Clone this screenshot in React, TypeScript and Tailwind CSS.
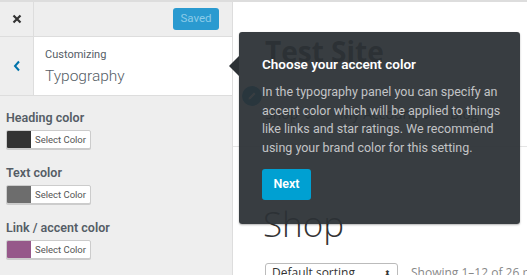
import React from 'react';

const swatches = [
  { label: 'Heading color', color: '#333333' },
  { label: 'Text color', color: '#6d6d6d' },
  { label: 'Link / accent color', color: '#96588a' },
];

function ColorControl({ label, color }: { label: string; color: string }) {
  return (
    <div className="mb-[16px]">
      <div className="text-[12.5px] font-semibold text-[#555d66] leading-[16px] mb-[4px]">{label}</div>
      <button className="flex h-[19px] w-[85px] items-stretch rounded-[2px] border border-[#ccc] bg-white shadow-[0_1px_0_#ccc] overflow-hidden">
        <span className="w-[24px] shrink-0" style={{ backgroundColor: color }} />
        <span className="flex-1 text-center text-[9.5px] leading-[17px] text-[#555]">Select Color</span>
      </button>
    </div>
  );
}

export default function App() {
  return (
    <div
      className="relative flex w-[527px] h-[275px] overflow-hidden border-t-2 border-[#ddd] bg-white"
      style={{ fontFamily: 'Roboto, "Noto Sans", sans-serif' }}
    >
      {/* customizer sidebar */}
      <div className="w-[233px] shrink-0 bg-[#eee] border-r border-[#ddd] flex flex-col">
        <div className="flex h-[35px] shrink-0 border-b border-[#ddd]">
          <div className="w-[34px] border-r border-[#ddd] flex items-center justify-center">
            <svg width="10" height="10" viewBox="0 0 10 10">
              <path d="M1.5 1.5 L8.5 8.5 M8.5 1.5 L1.5 8.5" stroke="#333" strokeWidth="2.2" />
            </svg>
          </div>
          <div className="flex-1 flex items-center justify-end pr-[13px]">
            <button className="h-[22px] w-[46px] rounded-[3px] bg-[#2a9ad0] text-[11.5px] text-[#8ccbe8]">Saved</button>
          </div>
        </div>
        <div className="flex h-[59px] shrink-0 border-b border-[#ddd]">
          <div className="w-[34px] border-r border-[#ddd] flex items-center justify-center">
            <svg width="8" height="12" viewBox="0 0 8 12">
              <path d="M6 1.5 L2 6 L6 10.5" stroke="#0073aa" strokeWidth="2" fill="none" />
            </svg>
          </div>
          <div className="flex-1 bg-white pl-[11px] pt-[11px]">
            <div className="text-[11px] text-[#555d66] leading-[14px]">Customizing</div>
            <div className="mt-[3px] text-[15.5px] font-light text-[#555d66] leading-[22px]">Typography</div>
          </div>
        </div>
        <div className="pl-[6px] pt-[14px]">
          {swatches.map((s) => (
            <ColorControl key={s.label} label={s.label} color={s.color} />
          ))}
        </div>
      </div>

      {/* site preview */}
      <div className="flex-1 flex flex-col" style={{ fontFamily: '"Open Sans", sans-serif' }}>
        <div className="h-[145px] shrink-0 border-b border-[#e5e5e5] pl-[32px] pt-[32px]">
          <div className="text-[28px] font-bold text-[#333] leading-[34px]">Test Site</div>
          <div className="flex items-center mt-[18px] -ml-[23px]">
            <span className="w-[20px] h-[20px] rounded-full bg-[#0085ba] flex items-center justify-center">
              <svg width="10" height="10" viewBox="0 0 10 10">
                <path d="M1.5 8.5 L2 6.5 L7 1.5 L8.5 3 L3.5 8 Z" fill="#fff" />
              </svg>
            </span>
          </div>
          <div className="flex text-[14px] text-[#333] -mt-[3px]">
            <span className="w-[75px]">Shop ⌄</span>
            <span className="w-[110px]">My Account ⌄</span>
            <span>Blog</span>
          </div>
        </div>
        <div className="pl-[30px] pt-[56px] text-[35px] font-light text-[#333] leading-[42px]">Shop</div>
        <div className="flex items-center pl-[32px] mt-[18px] gap-[13px]">
          <div className="w-[133px] h-[20px] shrink-0 border border-[#bbb] rounded-[3px] flex items-center justify-between px-[6px] text-[12px] text-[#333]">
            <span>Default sorting</span>
            <span className="text-[8px] leading-[8px]">⬍</span>
          </div>
          <span className="text-[12px] text-[#888] whitespace-nowrap">Showing 1–12 of 26 results</span>
        </div>
      </div>

      {/* guided tour tooltip */}
      <div className="absolute left-[239px] top-[30px] w-[281px] h-[192px] rounded-[3px] bg-[#2c3135]/[0.94] pl-[23px] pt-[22px] shadow-[0_1px_2px_rgba(0,0,0,0.3)]">
        <div className="absolute left-[-10px] top-[24px] w-0 h-0 border-y-[10px] border-y-transparent border-r-[10px] border-r-[#2c3135]" />
        <div className="text-[13.5px] font-semibold text-white leading-[20px]">Choose your accent color</div>
        <p className="mt-[9px] text-[12.5px] leading-[18.5px] text-[#c3c4c6] pr-[8px]">
          In the typography panel you can specify an accent color which will be applied to things like links and star ratings. We recommend using your brand color for this setting.
        </p>
        <button className="mt-[12px] h-[31px] w-[49px] rounded-[3px] bg-[#00a0d2] text-[12.5px] font-semibold text-white">Next</button>
      </div>
    </div>
  );
}
